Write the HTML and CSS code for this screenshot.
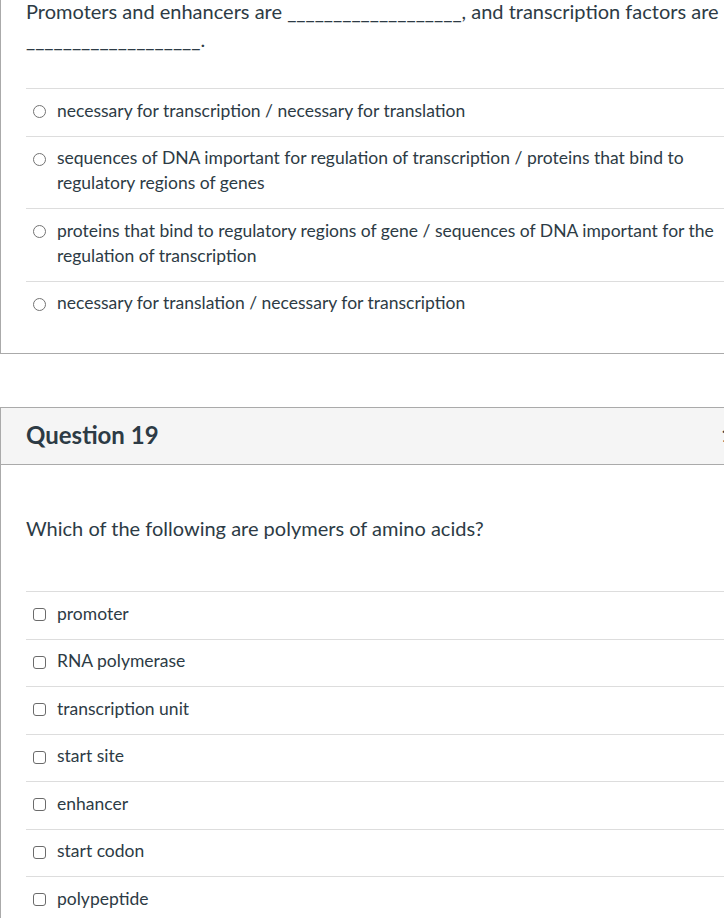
FILE: index.html
```html
<!DOCTYPE html>
<html>
<head>
<meta charset="utf-8">
<link rel="stylesheet" href="styles.css">
</head>
<body>
<div class="page">
  <section class="question q-first">
    <div class="q-body">
      <p class="q-text">Promoters and enhancers are ___________________, and transcription factors are ___________________.</p>
      <ul class="answers">
        <li class="answer"><span class="radio"></span><span class="label">necessary for transcription / necessary for translation</span></li>
        <li class="answer"><span class="radio"></span><span class="label">sequences of DNA important for regulation of transcription / proteins that bind to regulatory regions of genes</span></li>
        <li class="answer"><span class="radio"></span><span class="label">proteins that bind to regulatory regions of gene / sequences of DNA important for the regulation of transcription</span></li>
        <li class="answer"><span class="radio"></span><span class="label">necessary for translation / necessary for transcription</span></li>
      </ul>
    </div>
  </section>

  <section class="question">
    <header class="q-header">
      <h2 class="q-title">Question 19</h2>
      <span class="q-points">1 pts</span>
    </header>
    <div class="q-body q-body-2">
      <p class="q-text">Which of the following are polymers of amino acids?</p>
      <ul class="answers">
        <li class="answer"><span class="check"></span><span class="label">promoter</span></li>
        <li class="answer"><span class="check"></span><span class="label">RNA polymerase</span></li>
        <li class="answer"><span class="check"></span><span class="label">transcription unit</span></li>
        <li class="answer"><span class="check"></span><span class="label">start site</span></li>
        <li class="answer"><span class="check"></span><span class="label">enhancer</span></li>
        <li class="answer"><span class="check"></span><span class="label">start codon</span></li>
        <li class="answer"><span class="check"></span><span class="label">polypeptide</span></li>
      </ul>
    </div>
  </section>
</div>
</body>
</html>
```

FILE: styles.css
```css
html, body {
  margin: 0;
  padding: 0;
  background: #fff;
  overflow: hidden;
}

body {
  font-family: Lato, "Liberation Sans", sans-serif;
  color: #2d3b45;
}

.page {
  width: 790px;
}

.question {
  border: 1px solid #aaaaaa;
  background: #fff;
}

.q-first {
  border-top: none;
  margin-bottom: 53px;
}

.q-body {
  padding: 0 0 25px 25px;
}

.q-text {
  margin: 0;
  font-size: 20px;
  line-height: 28px;
  padding-right: 60px;
}

.q-first .q-text {
  margin-top: -3px;
  margin-bottom: 35px;
}

.answers {
  list-style: none;
  margin: 0;
  padding: 0;
}

.answer {
  display: flex;
  align-items: flex-start;
  border-top: 1px solid #dddddd;
  padding: 8.5px 50px 13px 7px;
  font-size: 17.5px;
  line-height: 25px;
}

.radio {
  flex: none;
  width: 11px;
  height: 11px;
  border: 1px solid #737373;
  border-radius: 50%;
  margin-top: 7.5px;
  margin-right: 11px;
}

.check {
  flex: none;
  width: 11px;
  height: 11px;
  border: 1px solid #6b6b6b;
  border-radius: 3px;
  margin-top: 7.5px;
  margin-right: 11px;
}

.q-header {
  display: flex;
  justify-content: space-between;
  align-items: center;
  height: 56px;
  padding: 0 26px 3px 25px;
  box-sizing: border-box;
  background: #f5f5f5;
  border-bottom: 1px solid #aaaaaa;
}

.q-header {
  height: 57px;
}

.q-title {
  margin: 0;
  font-size: 24px;
  font-weight: 700;
}

.q-points {
  font-size: 19px;
  font-weight: 700;
}

.q-body-2 {
  padding-top: 49px;
}

.q-body-2 .q-text {
  margin-bottom: 49px;
}
```
